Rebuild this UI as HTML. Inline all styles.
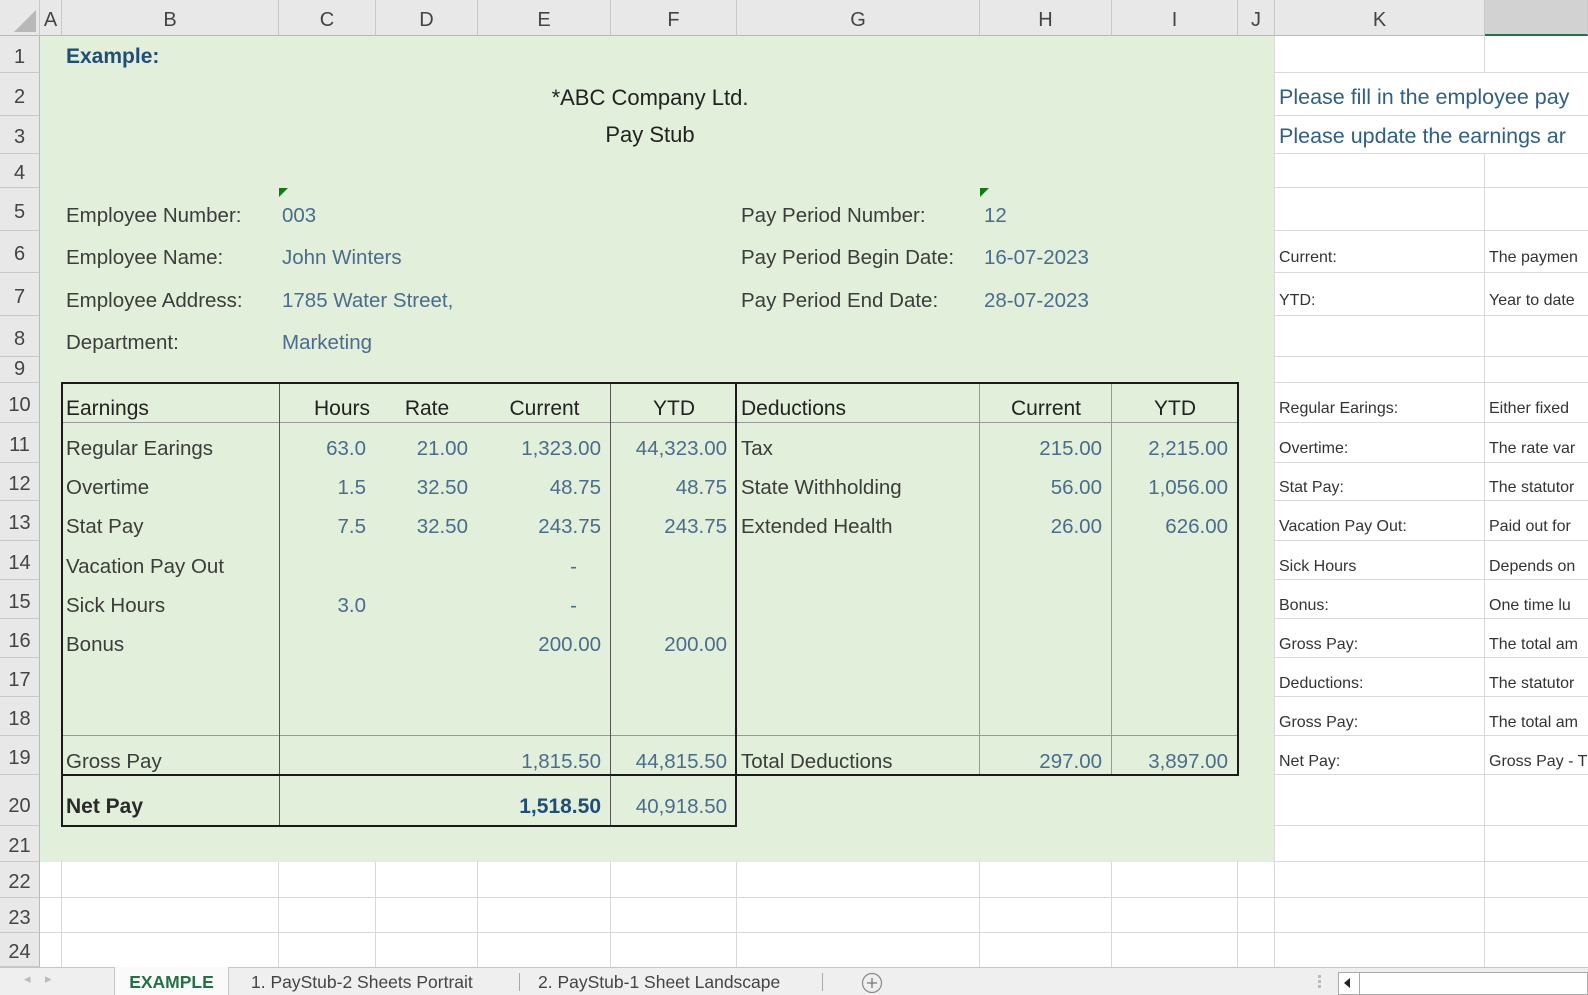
<!DOCTYPE html>
<html><head><meta charset="utf-8"><style>
*{margin:0;padding:0;box-sizing:border-box}
body{width:1588px;height:995px;position:relative;overflow:hidden;background:#fff;font-family:"Liberation Sans",sans-serif;color:#3c3c3c}
.a{position:absolute}
.hl{position:absolute;height:1px;background:#d9d9d9}
.vl{position:absolute;width:1px;background:#d9d9d9}
.ch{position:absolute;top:0;height:36px;background:#e8e8e8;border-right:1px solid #c8c8c8;border-bottom:1px solid #b8b8b8;font-size:20px;color:#444;display:flex;align-items:center;justify-content:center;padding-top:6px}
.rh{position:absolute;left:0;width:40px;background:#e8e8e8;border-bottom:1px solid #c8c8c8;border-right:1px solid #b8b8b8;font-size:20px;color:#444;display:flex;align-items:center;justify-content:center;padding-top:6px}
.c{position:absolute;display:flex;align-items:center;font-size:20.5px;white-space:nowrap;padding-top:12px}
.r{justify-content:flex-end;padding-right:10px}
.m{justify-content:center}
.v{color:#4a6d8c}
.b{font-weight:bold;color:#2a2a2a}
.n{font-size:16px;color:#333}
.bk{position:absolute;background:#1a1a1a}
.tl{position:absolute;background:#9a9a9a}
</style></head><body>
<div class="a" style="left:40px;top:36px;width:1235px;height:826px;background:#e2efda"></div>
<div class="hl" style="left:40px;top:897px;width:1548px"></div>
<div class="hl" style="left:40px;top:932px;width:1548px"></div>
<div class="vl" style="left:61px;top:862px;height:105px"></div>
<div class="vl" style="left:278px;top:862px;height:105px"></div>
<div class="vl" style="left:375px;top:862px;height:105px"></div>
<div class="vl" style="left:477px;top:862px;height:105px"></div>
<div class="vl" style="left:610px;top:862px;height:105px"></div>
<div class="vl" style="left:736px;top:862px;height:105px"></div>
<div class="vl" style="left:979px;top:862px;height:105px"></div>
<div class="vl" style="left:1111px;top:862px;height:105px"></div>
<div class="vl" style="left:1237px;top:862px;height:105px"></div>
<div class="vl" style="left:1274px;top:36px;height:931px"></div>
<div class="hl" style="left:1275px;top:72px;width:313px"></div>
<div class="hl" style="left:1275px;top:115px;width:313px"></div>
<div class="hl" style="left:1275px;top:153px;width:313px"></div>
<div class="hl" style="left:1275px;top:187px;width:313px"></div>
<div class="hl" style="left:1275px;top:230px;width:313px"></div>
<div class="hl" style="left:1275px;top:272px;width:313px"></div>
<div class="hl" style="left:1275px;top:315px;width:313px"></div>
<div class="hl" style="left:1275px;top:356px;width:313px"></div>
<div class="hl" style="left:1275px;top:382px;width:313px"></div>
<div class="hl" style="left:1275px;top:422px;width:313px"></div>
<div class="hl" style="left:1275px;top:462px;width:313px"></div>
<div class="hl" style="left:1275px;top:500px;width:313px"></div>
<div class="hl" style="left:1275px;top:540px;width:313px"></div>
<div class="hl" style="left:1275px;top:579px;width:313px"></div>
<div class="hl" style="left:1275px;top:618px;width:313px"></div>
<div class="hl" style="left:1275px;top:657px;width:313px"></div>
<div class="hl" style="left:1275px;top:696px;width:313px"></div>
<div class="hl" style="left:1275px;top:735px;width:313px"></div>
<div class="hl" style="left:1275px;top:774px;width:313px"></div>
<div class="hl" style="left:1275px;top:825px;width:313px"></div>
<div class="hl" style="left:1275px;top:861px;width:313px"></div>
<div class="vl" style="left:1484px;top:36px;height:37px"></div>
<div class="vl" style="left:1484px;top:154px;height:813px"></div>

<div class="a" style="left:0;top:0;width:40px;height:36px;background:#e8e8e8;border-right:1px solid #c8c8c8;border-bottom:1px solid #b8b8b8"></div>
<svg class="a" style="left:14px;top:10px" width="22" height="22"><polygon points="22,0 22,22 0,22" fill="#b8b8b8"/></svg>
<div class="ch" style="left:40px;width:22px">A</div>
<div class="ch" style="left:62px;width:217px">B</div>
<div class="ch" style="left:279px;width:97px">C</div>
<div class="ch" style="left:376px;width:102px">D</div>
<div class="ch" style="left:478px;width:133px">E</div>
<div class="ch" style="left:611px;width:126px">F</div>
<div class="ch" style="left:737px;width:243px">G</div>
<div class="ch" style="left:980px;width:132px">H</div>
<div class="ch" style="left:1112px;width:126px">I</div>
<div class="ch" style="left:1238px;width:37px">J</div>
<div class="ch" style="left:1275px;width:210px">K</div>
<div class="ch" style="left:1485px;width:103px;background:#d2d2d2;border-bottom:2px solid #217346"></div>

<div class="rh" style="top:36px;height:37px">1</div>
<div class="rh" style="top:73px;height:43px">2</div>
<div class="rh" style="top:116px;height:38px">3</div>
<div class="rh" style="top:154px;height:34px">4</div>
<div class="rh" style="top:188px;height:43px">5</div>
<div class="rh" style="top:231px;height:42px">6</div>
<div class="rh" style="top:273px;height:43px">7</div>
<div class="rh" style="top:316px;height:41px">8</div>
<div class="rh" style="top:357px;height:26px;padding-top:0">9</div>
<div class="rh" style="top:383px;height:40px">10</div>
<div class="rh" style="top:423px;height:40px">11</div>
<div class="rh" style="top:463px;height:38px">12</div>
<div class="rh" style="top:501px;height:40px">13</div>
<div class="rh" style="top:541px;height:39px">14</div>
<div class="rh" style="top:580px;height:39px">15</div>
<div class="rh" style="top:619px;height:39px">16</div>
<div class="rh" style="top:658px;height:39px">17</div>
<div class="rh" style="top:697px;height:39px">18</div>
<div class="rh" style="top:736px;height:39px">19</div>
<div class="rh" style="top:775px;height:51px;padding-top:12px">20</div>
<div class="rh" style="top:826px;height:36px">21</div>
<div class="rh" style="top:862px;height:36px">22</div>
<div class="rh" style="top:898px;height:35px">23</div>
<div class="rh" style="top:933px;height:34px">24</div>

<div class="c" style="left:66px;top:36px;height:37px;font-weight:bold;color:#1f4e79;font-size:21px;padding-top:5px">Example:</div>
<div class="c m" style="left:376px;top:73px;width:548px;height:43px;font-size:22px;color:#222;padding-top:6px">*ABC Company Ltd.</div>
<div class="c m" style="left:376px;top:116px;width:548px;height:38px;font-size:22px;color:#222;padding-top:0">Pay Stub</div>
<svg class="a" style="left:279px;top:188px" width="9" height="9"><polygon points="0,0 9,0 0,9" fill="#107c10"/></svg>
<svg class="a" style="left:980px;top:188px" width="9" height="9"><polygon points="0,0 9,0 0,9" fill="#107c10"/></svg>
<div class="c" style="left:66px;top:188px;height:43px">Employee Number:</div>
<div class="c v" style="left:282px;top:188px;height:43px">003</div>
<div class="c" style="left:66px;top:231px;height:42px">Employee Name:</div>
<div class="c v" style="left:282px;top:231px;height:42px">John Winters</div>
<div class="c" style="left:66px;top:273px;height:43px">Employee Address:</div>
<div class="c v" style="left:282px;top:273px;height:43px">1785 Water Street,</div>
<div class="c" style="left:66px;top:316px;height:41px">Department:</div>
<div class="c v" style="left:282px;top:316px;height:41px">Marketing</div>
<div class="c" style="left:741px;top:188px;height:43px">Pay Period Number:</div>
<div class="c v" style="left:984px;top:188px;height:43px">12</div>
<div class="c" style="left:741px;top:231px;height:42px">Pay Period Begin Date:</div>
<div class="c v" style="left:984px;top:231px;height:42px">16-07-2023</div>
<div class="c" style="left:741px;top:273px;height:43px">Pay Period End Date:</div>
<div class="c v" style="left:984px;top:273px;height:43px">28-07-2023</div>

<div class="tl" style="left:62px;top:422px;width:1176px;height:1px"></div>
<div class="tl" style="left:62px;top:735px;width:1176px;height:1px"></div>
<div class="tl" style="left:279px;top:383px;width:1px;height:443px;background:#555"></div>
<div class="tl" style="left:610px;top:383px;width:1px;height:443px;background:#555"></div>
<div class="tl" style="left:979px;top:383px;width:1px;height:392px"></div>
<div class="tl" style="left:1111px;top:383px;width:1px;height:392px"></div>
<div class="bk" style="left:61px;top:382px;width:1178px;height:2px"></div>
<div class="bk" style="left:61px;top:382px;width:2px;height:445px"></div>
<div class="bk" style="left:735px;top:382px;width:2px;height:445px"></div>
<div class="bk" style="left:1237px;top:382px;width:2px;height:394px"></div>
<div class="bk" style="left:61px;top:774px;width:1178px;height:2px"></div>
<div class="bk" style="left:61px;top:825px;width:676px;height:2px"></div>

<div class="c" style="left:66px;top:383px;height:40px;color:#222;font-size:21px">Earnings</div>
<div class="c r" style="left:279px;top:383px;width:97px;height:40px;padding-right:6px;color:#222;font-size:21px">Hours</div>
<div class="c m" style="left:376px;top:383px;width:102px;height:40px;color:#222;font-size:21px">Rate</div>
<div class="c m" style="left:478px;top:383px;width:133px;height:40px;color:#222;font-size:21px">Current</div>
<div class="c m" style="left:611px;top:383px;width:126px;height:40px;color:#222;font-size:21px">YTD</div>
<div class="c" style="left:741px;top:383px;height:40px;color:#222;font-size:21px">Deductions</div>
<div class="c m" style="left:980px;top:383px;width:132px;height:40px;color:#222;font-size:21px">Current</div>
<div class="c m" style="left:1112px;top:383px;width:126px;height:40px;color:#222;font-size:21px">YTD</div>

<div class="c" style="left:66px;top:423px;height:40px">Regular Earings</div>
<div class="c r v" style="left:279px;top:423px;width:97px;height:40px">63.0</div>
<div class="c r v" style="left:376px;top:423px;width:102px;height:40px">21.00</div>
<div class="c r v" style="left:478px;top:423px;width:133px;height:40px">1,323.00</div>
<div class="c r v" style="left:611px;top:423px;width:126px;height:40px">44,323.00</div>
<div class="c" style="left:741px;top:423px;height:40px">Tax</div>
<div class="c r v" style="left:980px;top:423px;width:132px;height:40px">215.00</div>
<div class="c r v" style="left:1112px;top:423px;width:126px;height:40px">2,215.00</div>

<div class="c" style="left:66px;top:463px;height:38px">Overtime</div>
<div class="c r v" style="left:279px;top:463px;width:97px;height:38px">1.5</div>
<div class="c r v" style="left:376px;top:463px;width:102px;height:38px">32.50</div>
<div class="c r v" style="left:478px;top:463px;width:133px;height:38px">48.75</div>
<div class="c r v" style="left:611px;top:463px;width:126px;height:38px">48.75</div>
<div class="c" style="left:741px;top:463px;height:38px">State Withholding</div>
<div class="c r v" style="left:980px;top:463px;width:132px;height:38px">56.00</div>
<div class="c r v" style="left:1112px;top:463px;width:126px;height:38px">1,056.00</div>

<div class="c" style="left:66px;top:501px;height:40px">Stat Pay</div>
<div class="c r v" style="left:279px;top:501px;width:97px;height:40px">7.5</div>
<div class="c r v" style="left:376px;top:501px;width:102px;height:40px">32.50</div>
<div class="c r v" style="left:478px;top:501px;width:133px;height:40px">243.75</div>
<div class="c r v" style="left:611px;top:501px;width:126px;height:40px">243.75</div>
<div class="c" style="left:741px;top:501px;height:40px">Extended Health</div>
<div class="c r v" style="left:980px;top:501px;width:132px;height:40px">26.00</div>
<div class="c r v" style="left:1112px;top:501px;width:126px;height:40px">626.00</div>

<div class="c" style="left:66px;top:541px;height:39px">Vacation Pay Out</div>
<div class="c r v" style="left:478px;top:541px;width:133px;height:39px;padding-right:34px">-</div>
<div class="c" style="left:66px;top:580px;height:39px">Sick Hours</div>
<div class="c r v" style="left:279px;top:580px;width:97px;height:39px">3.0</div>
<div class="c r v" style="left:478px;top:580px;width:133px;height:39px;padding-right:34px">-</div>
<div class="c" style="left:66px;top:619px;height:39px">Bonus</div>
<div class="c r v" style="left:478px;top:619px;width:133px;height:39px">200.00</div>
<div class="c r v" style="left:611px;top:619px;width:126px;height:39px">200.00</div>

<div class="c" style="left:66px;top:736px;height:39px">Gross Pay</div>
<div class="c r v" style="left:478px;top:736px;width:133px;height:39px">1,815.50</div>
<div class="c r v" style="left:611px;top:736px;width:126px;height:39px">44,815.50</div>
<div class="c" style="left:741px;top:736px;height:39px">Total Deductions</div>
<div class="c r v" style="left:980px;top:736px;width:132px;height:39px">297.00</div>
<div class="c r v" style="left:1112px;top:736px;width:126px;height:39px">3,897.00</div>

<div class="c b" style="left:66px;top:776px;height:50px;font-size:21px">Net Pay</div>
<div class="c r" style="left:478px;top:776px;width:133px;height:50px;font-weight:bold;color:#1f4e79;font-size:21px">1,518.50</div>
<div class="c r v" style="left:611px;top:776px;width:126px;height:50px">40,918.50</div>

<div class="c" style="left:1279px;top:73px;height:43px;font-size:21.5px;color:#2e5e8a;overflow:hidden;width:309px;padding-top:6px">Please fill in the employee pay</div>
<div class="c" style="left:1279px;top:116px;height:38px;font-size:21.5px;color:#2e5e8a;overflow:hidden;width:309px;padding-top:2px">Please update the earnings ar</div>
<div class="c n" style="left:1279px;top:231px;height:42px">Current:</div><div class="c n" style="left:1489px;top:231px;height:42px;width:99px;overflow:hidden">The paymen</div>
<div class="c n" style="left:1279px;top:273px;height:43px">YTD:</div><div class="c n" style="left:1489px;top:273px;height:43px;width:99px;overflow:hidden">Year to date</div>
<div class="c n" style="left:1279px;top:383px;height:40px">Regular Earings:</div><div class="c n" style="left:1489px;top:383px;height:40px;width:99px;overflow:hidden">Either fixed</div>
<div class="c n" style="left:1279px;top:423px;height:40px">Overtime:</div><div class="c n" style="left:1489px;top:423px;height:40px;width:99px;overflow:hidden">The rate var</div>
<div class="c n" style="left:1279px;top:463px;height:38px">Stat Pay:</div><div class="c n" style="left:1489px;top:463px;height:38px;width:99px;overflow:hidden">The statutor</div>
<div class="c n" style="left:1279px;top:501px;height:40px">Vacation Pay Out:</div><div class="c n" style="left:1489px;top:501px;height:40px;width:99px;overflow:hidden">Paid out for</div>
<div class="c n" style="left:1279px;top:541px;height:39px">Sick Hours</div><div class="c n" style="left:1489px;top:541px;height:39px;width:99px;overflow:hidden">Depends on</div>
<div class="c n" style="left:1279px;top:580px;height:39px">Bonus:</div><div class="c n" style="left:1489px;top:580px;height:39px;width:99px;overflow:hidden">One time lu</div>
<div class="c n" style="left:1279px;top:619px;height:39px">Gross Pay:</div><div class="c n" style="left:1489px;top:619px;height:39px;width:99px;overflow:hidden">The total am</div>
<div class="c n" style="left:1279px;top:658px;height:39px">Deductions:</div><div class="c n" style="left:1489px;top:658px;height:39px;width:99px;overflow:hidden">The statutor</div>
<div class="c n" style="left:1279px;top:697px;height:39px">Gross Pay:</div><div class="c n" style="left:1489px;top:697px;height:39px;width:99px;overflow:hidden">The total am</div>
<div class="c n" style="left:1279px;top:736px;height:39px">Net Pay:</div><div class="c n" style="left:1489px;top:736px;height:39px;width:99px;overflow:hidden">Gross Pay - T</div>

<div class="a" style="left:0;top:967px;width:1588px;height:28px;background:#efefef;border-top:1px solid #c6c6c6"></div>
<div class="a" style="left:24px;top:971px;font-size:13px;color:#bbb">&#9666;&nbsp;&nbsp;&nbsp;&nbsp;&#9656;</div>
<div class="a" style="left:114px;top:967px;width:115px;height:28px;background:#fafafa;border-left:1px solid #c6c6c6;border-right:1px solid #c6c6c6"></div>
<div class="c" style="left:114px;top:967px;width:115px;height:28px;justify-content:center;font-weight:bold;color:#217346;font-size:17.5px;padding-top:2px">EXAMPLE</div>
<div class="c" style="left:251px;top:967px;height:28px;font-size:17.5px;color:#444;padding-top:2px">1. PayStub-2 Sheets Portrait</div>
<div class="a" style="left:519px;top:973px;width:1px;height:18px;background:#aaa"></div>
<div class="c" style="left:538px;top:967px;height:28px;font-size:17.5px;color:#444;padding-top:2px">2. PayStub-1 Sheet Landscape</div>
<div class="a" style="left:822px;top:973px;width:1px;height:18px;background:#aaa"></div>
<svg class="a" style="left:861px;top:972px" width="22" height="22"><circle cx="11" cy="11" r="9.5" fill="none" stroke="#888" stroke-width="1.2"/><path d="M11 6v10M6 11h10" stroke="#777" stroke-width="1.3"/></svg>
<div class="a" style="left:1318px;top:975px;width:3px;height:3px;background:#bbb;box-shadow:0 5px 0 #bbb,0 10px 0 #bbb"></div>
<div class="a" style="left:1338px;top:972px;width:250px;height:23px;background:#fff;border:1px solid #aaa"></div>
<div class="a" style="left:1338px;top:972px;width:22px;height:23px;border-right:1px solid #aaa"></div>
<svg class="a" style="left:1343px;top:977px" width="10" height="12"><polygon points="7,1 7,11 1,6" fill="#222"/></svg>
</body></html>
